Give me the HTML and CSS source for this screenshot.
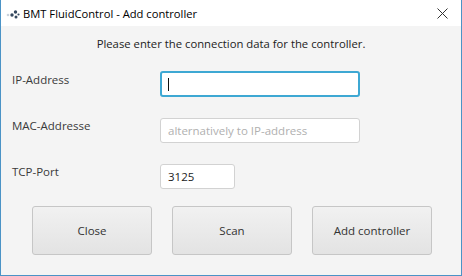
FILE: index.html
```html
<!DOCTYPE html>
<html>
<head>
<meta charset="utf-8">
<link rel="stylesheet" href="styles.css">
</head>
<body>
<div class="window">
  <div class="titlebar">
    <svg class="appicon" width="14" height="10" viewBox="0 0 14 10">
      <circle cx="2" cy="6" r="1.3" fill="#c9d2dc"/>
      <circle cx="6" cy="6" r="1.7" fill="#34485e"/>
      <circle cx="9.5" cy="3" r="1.7" fill="#34485e"/>
      <circle cx="10" cy="8" r="1.5" fill="#34485e"/>
      <circle cx="12.5" cy="5.5" r="1.1" fill="#34485e"/>
    </svg>
    <span class="title">BMT FluidControl - Add controller</span>
    <svg class="close" width="11" height="11" viewBox="0 0 11 11">
      <path d="M0.5 0.5 L10.5 10.5 M10.5 0.5 L0.5 10.5" stroke="#333" stroke-width="1" fill="none"/>
    </svg>
  </div>
  <div class="content">
    <p class="intro">Please enter the connection data for the controller.</p>
    <div class="form">
      <div class="row">
        <span class="label">IP-Address</span>
        <div class="input focused wide"><span class="caret"></span></div>
      </div>
      <div class="row">
        <span class="label">MAC-Addresse</span>
        <div class="input wide"><span class="placeholder">alternatively to IP-address</span></div>
      </div>
      <div class="row">
        <span class="label">TCP-Port</span>
        <div class="input short"><span class="value">3125</span></div>
      </div>
    </div>
    <div class="buttons">
      <button class="btn">Close</button>
      <button class="btn">Scan</button>
      <button class="btn">Add controller</button>
    </div>
  </div>
</div>
</body>
</html>
```
FILE: styles.css
```css
html, body {
  margin: 0;
  padding: 0;
}
body {
  width: 462px;
  height: 276px;
  font-family: "Open Sans", "Noto Sans", sans-serif;
  font-size: 11.5px;
  color: #333;
  background: #fff;
}
.window {
  box-sizing: border-box;
  width: 462px;
  height: 276px;
  border: 1px solid #4b93c6;
  border-top: none;
  display: flex;
  flex-direction: column;
}
.titlebar {
  height: 26px;
  background: #fff;
  display: flex;
  align-items: center;
  position: relative;
}
.appicon {
  margin-left: 5px;
  margin-top: 1px;
}
.title {
  margin-left: 3px;
  font-size: 11.2px;
  color: #000;
  margin-top: 1px;
}
.close {
  position: absolute;
  right: 13px;
  top: 8px;
}
.content {
  flex: 1;
  background: #f4f4f4;
  display: flex;
  flex-direction: column;
}
.intro {
  margin: 10px 0 0 0;
  text-align: center;
  font-size: 11.3px;
  color: #222;
  line-height: 16px;
}
.form {
  margin-top: 19px;
  display: flex;
  flex-direction: column;
  gap: 20px;
}
.row {
  display: flex;
  align-items: center;
  padding-left: 11px;
  height: 26px;
}
.label {
  width: 148px;
  color: #3a3a3a;
  position: relative;
  top: -5px;
}
.input {
  box-sizing: border-box;
  height: 25px;
  background: #fff;
  border: 1px solid #d2d2d2;
  border-radius: 3px;
  display: flex;
  align-items: center;
  padding-left: 7px;
}
.input.wide { width: 200px; }
.input.short { width: 75px; }
.input.focused {
  height: 26px;
  border: 2px solid #3ea8d3;
  padding-left: 6px;
}
.caret {
  width: 1px;
  height: 13px;
  background: #111;
}
.placeholder {
  color: #b0b0b0;
}
.value {
  color: #222;
}
.buttons {
  margin-top: 17px;
  display: flex;
  gap: 20px;
  padding-left: 31px;
}
.btn {
  width: 120px;
  height: 49px;
  font-family: inherit;
  font-size: 11.5px;
  color: #333;
  background: linear-gradient(#f1f1f1, #e3e3e3);
  border: 1px solid #c6c6c6;
  border-radius: 3px;
  padding: 0;
}
```
